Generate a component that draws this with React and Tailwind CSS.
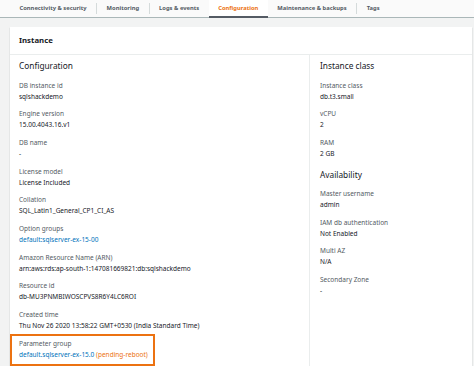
import React from 'react';

const tabs = [
  'Connectivity & security',
  'Monitoring',
  'Logs & events',
  'Configuration',
  'Maintenance & backups',
  'Tags',
];

const leftFields = [
  { label: 'DB instance id', value: 'sqlshackdemo' },
  { label: 'Engine version', value: '15.00.4043.16.v1' },
  { label: 'DB name', value: '-' },
  { label: 'License model', value: 'License Included' },
  { label: 'Collation', value: 'SQL_Latin1_General_CP1_CI_AS' },
  { label: 'Option groups', value: 'default:sqlserver-ex-15-00', link: true },
  { label: 'Amazon Resource Name (ARN)', value: 'arn:aws:rds:ap-south-1:147081669821:db:sqlshackdemo' },
  { label: 'Resource id', value: 'db-MU3PNMBIWOSCPVS8R6Y4LC6ROI' },
  { label: 'Created time', value: 'Thu Nov 26 2020 13:58:22 GMT+0530 (India Standard Time)' },
];

const classFields = [
  { label: 'Instance class', value: 'db.t3.small' },
  { label: 'vCPU', value: '2' },
  { label: 'RAM', value: '2 GB' },
];

const availFields = [
  { label: 'Master username', value: 'admin' },
  { label: 'IAM db authentication', value: 'Not Enabled' },
  { label: 'Multi AZ', value: 'N/A' },
  { label: 'Secondary Zone', value: '-' },
];

function Field({ label, value, link }) {
  return (
    <div>
      <div className="text-[#545b64] leading-[11px]">{label}</div>
      <div className={`leading-[11px] ${link ? 'text-[#0073bb]' : 'text-[#16191f]'}`}>{value}</div>
    </div>
  );
}

export default function App() {
  return (
    <div
      className="w-[474px] h-[366px] overflow-hidden bg-[#f2f3f3] text-[6.5px]"
      style={{ fontFamily: '"Noto Sans", "Open Sans", Arial, sans-serif' }}
    >
      {/* Tabs */}
      <div className="h-[18px] flex items-stretch bg-[#fafafa] border-b border-[#aab7b8] pl-[10px]">
        {tabs.map((t, i) => {
          const active = t === 'Configuration';
          return (
            <div key={t} className="flex items-stretch">
              {i > 0 && !active && tabs[i - 1] !== 'Configuration' && (
                <div className="w-px my-[3px] bg-[#d5dbdb]" />
              )}
              <div
                className={`flex items-center px-[9.5px] text-[5.8px] font-bold ${
                  active ? 'text-[#ec7211] border-b-2 border-[#545b64] bg-white -mb-px' : 'text-[#545b64]'
                }`}
              >
                {t}
              </div>
            </div>
          );
        })}
      </div>

      {/* Panel */}
      <div className="ml-[10px] mt-[9px] w-[462px] bg-white shadow-[0_1px_1px_0_rgba(0,28,36,0.3)] h-[400px]">
        <div className="h-[28px] flex items-center px-[9px] border-b border-[#eaeded] text-[7.8px] font-bold text-[#16191f]">
          Instance
        </div>
        <div className="flex">
          <div className="w-[299px] pl-[9px] pt-[5px]">
            <div className="text-[8.3px] leading-[12px] text-[#16191f] mb-[7.5px]">Configuration</div>
            <div className="flex flex-col gap-[6.7px]">
              {leftFields.map((f) => (
                <Field key={f.label} {...f} />
              ))}
              <div className="-ml-[9px] -mt-[3.5px] w-fit border-2 border-[#ec7211] pl-[7px] pr-[5px] pt-[1.5px] pb-[4px]">
                <div className="text-[#545b64] leading-[11px]">Parameter group</div>
                <div className="leading-[11px]">
                  <span className="text-[#0073bb]">default.sqlserver-ex-15.0</span>{' '}
                  <span className="text-[#ec7211]">(pending-reboot)</span>
                </div>
              </div>
            </div>
          </div>
          <div className="flex-1 border-l border-[#eaeded] pl-[10px] pt-[5px]">
            <div className="text-[8.3px] leading-[12px] text-[#16191f] mb-[7.5px]">Instance class</div>
            <div className="flex flex-col gap-[6.7px]">
              {classFields.map((f) => (
                <Field key={f.label} {...f} />
              ))}
            </div>
            <div className="text-[8.3px] leading-[12px] text-[#16191f] mt-[10.5px] mb-[6.5px]">Availability</div>
            <div className="flex flex-col gap-[6.7px]">
              {availFields.map((f) => (
                <Field key={f.label} {...f} />
              ))}
            </div>
          </div>
        </div>
      </div>
    </div>
  );
}
